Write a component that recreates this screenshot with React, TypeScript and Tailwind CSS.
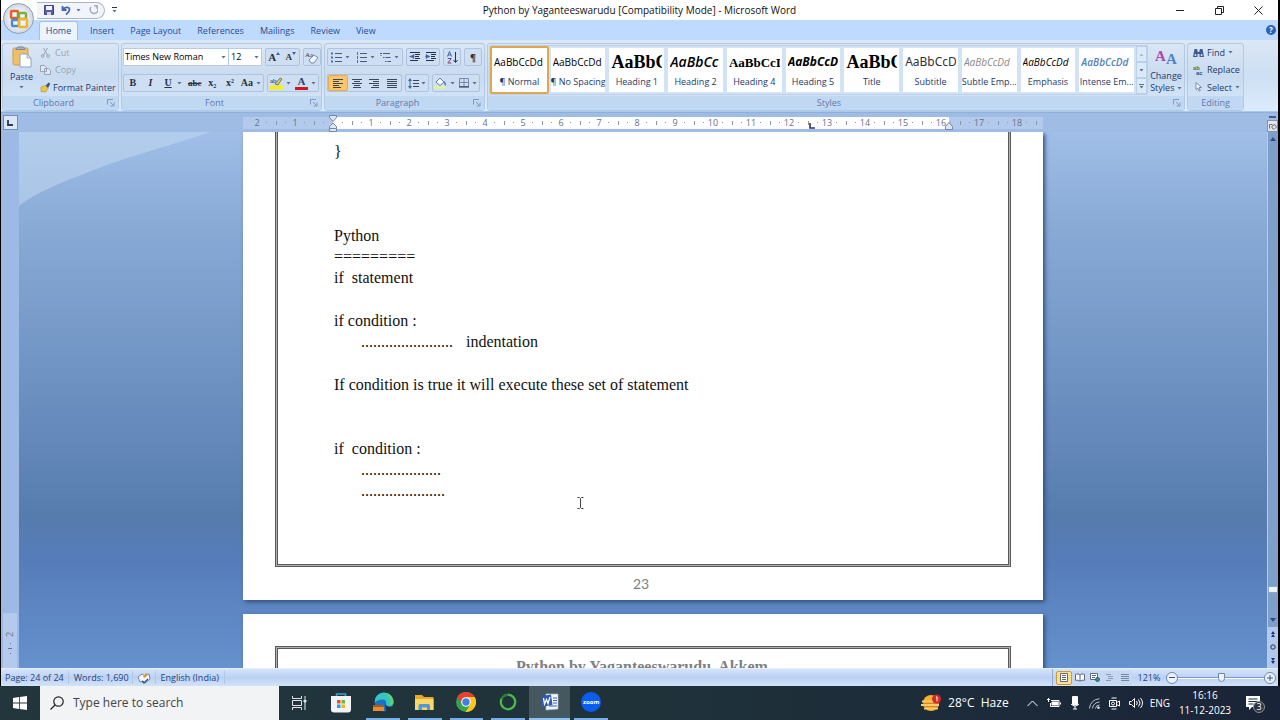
import React from "react";

type Kids = { children?: React.ReactNode };

function Caret({ className = "" }: { className?: string }) {
  return (
    <svg width="5" height="3" viewBox="0 0 5 3" className={"shrink-0 " + className} aria-hidden="true">
      <path d="M0.5 0h4L2.5 2.6z" fill="#5b6f94" />
    </svg>
  );
}

function Launcher() {
  return (
    <svg width="8" height="8" viewBox="0 0 8 8" aria-hidden="true">
      <path d="M.5 5.500V.5H6" fill="none" stroke="#7f99c4" />
      <path d="M3 3l3 3M7 3.500V7H3.500" fill="none" stroke="#7f99c4" />
    </svg>
  );
}

function Group({ label, className, launcher = true, children }: Kids & { label: string; className: string; launcher?: boolean }) {
  return (
    <section aria-label={label} className={"flex flex-col rounded-[3px] border border-[#b4c9e4] bg-linear-to-b from-[#dae6f4] via-[#c9dbf0] to-[#d6e8fa] " + className}>
      <div className="flex min-h-0 flex-1">{children}</div>
      <div className="flex h-[14px] items-center rounded-b-[3px] bg-[#c1d8f2] px-[3px] text-[#6079ac]">
        <span className="flex-1 text-center">{label}</span>
        {launcher && <span className="flex w-[14px] justify-end"><Launcher /></span>}
      </div>
    </section>
  );
}

function Box({ className = "", children }: Kids & { className?: string }) {
  return <div className={"flex h-[18px] items-stretch rounded-[2px] border border-[#aec3e0] bg-[#cfdff3] " + className}>{children}</div>;
}

function Tool({ label, className = "", children }: Kids & { label: string; className?: string }) {
  return (
    <button type="button" aria-label={label} className={"flex flex-1 items-center justify-center gap-[3px] font-['Liberation_Serif',serif] text-[10px] leading-none text-[#26303f] " + className}>
      {children}
    </button>
  );
}

function AlignIcon({ kind }: { kind: "left" | "center" | "right" | "full" }) {
  const d = {
    left: "M0 .5h10M0 2.500h6M0 4.500h10M0 6.500h6M0 8.500h8",
    center: "M0 .5h10M2 2.500h6M0 4.500h10M2 6.500h6M1 8.500h8",
    right: "M0 .5h10M4 2.500h6M0 4.500h10M4 6.500h6M2 8.500h8",
    full: "M0 .5h10M0 2.500h10M0 4.500h10M0 6.500h10M0 8.500h10",
  }[kind];
  return (
    <svg width="10" height="9" viewBox="0 0 10 9" aria-hidden="true">
      <path d={d} stroke="#3b4658" />
    </svg>
  );
}

function ListIcon({ kind }: { kind: "bullet" | "number" | "multi" }) {
  return (
    <svg width="11" height="11" viewBox="0 0 11 11" aria-hidden="true">
      {kind === "multi" ? (
        <path d="M0 1.500h2M3 1.500h7M3 5.500h1.500M5.500 5.500h5M5 9.500h1.500M7.500 9.500h3.500M1 3v1" stroke="#4b5a76" />
      ) : (
        <>
          <path d="M4 1.500h7M4 5.500h7M4 9.500h7" stroke="#4b5a76" />
          {kind === "bullet" ? (
            <path d="M0 1.500h2M0 5.500h2M0 9.500h2" stroke="#4a6fb5" strokeWidth="2" />
          ) : (
            <path d="M1.500 0v3M1.500 4v3M1.500 8v3" stroke="#4a6fb5" />
          )}
        </>
      )}
    </svg>
  );
}

function IndentIcon({ out = false }: { out?: boolean }) {
  return (
    <svg width="12" height="10" viewBox="0 0 12 10" aria-hidden="true">
      <path d="M1 .5h10M6 2.500h5M6 4.500h4M6 6.500h5M1 8.500h8" stroke="#26303f" />
      <path d={out ? "M5 2.500v4L1 4.500zM0 4.500h3" : "M1 2.500v4l4-2zM0 4.500h3"} fill="#3e63ad" stroke="#3e63ad" strokeWidth=".5" />
    </svg>
  );
}

function Ribbon() {
  const styles = [
    { name: "¶ Normal", sample: "AaBbCcDd", cls: "font-['Open_Sans',sans-serif] text-[10px] text-black" },
    { name: "¶ No Spacing", sample: "AaBbCcDd", cls: "font-['Open_Sans',sans-serif] text-[10px] text-black" },
    { name: "Heading 1", sample: "AaBbC", cls: "font-['Liberation_Serif',serif] text-[18px] font-bold text-black" },
    { name: "Heading 2", sample: "AaBbCc", cls: "font-['Open_Sans',sans-serif] text-[14px] font-semibold italic text-black" },
    { name: "Heading 4", sample: "AaBbCcD", cls: "font-['Liberation_Serif',serif] text-[13px] font-bold text-black" },
    { name: "Heading 5", sample: "AaBbCcD", cls: "font-['Open_Sans',sans-serif] text-[12px] font-bold italic text-black" },
    { name: "Title", sample: "AaBbC", cls: "font-['Liberation_Serif',serif] text-[18px] font-bold text-black" },
    { name: "Subtitle", sample: "AaBbCcD", cls: "font-['Noto_Sans',sans-serif] text-[12px] text-[#333]" },
    { name: "Subtle Emp...", sample: "AaBbCcDd", cls: "font-['Open_Sans',sans-serif] text-[10px] italic text-[#8a8a8a]" },
    { name: "Emphasis", sample: "AaBbCcDd", cls: "font-['Open_Sans',sans-serif] text-[10px] italic text-black" },
    { name: "Intense Em...", sample: "AaBbCcDd", cls: "font-['Open_Sans',sans-serif] text-[10px] font-semibold italic text-[#4f81bd]" },
  ];
  return (
    <div className="flex h-[72px] shrink-0 gap-[2px] border-b border-[#a9c9ee] bg-linear-to-b from-[#dbe7f5] via-[#cddff2] to-[#dcecfc] pt-[3px] pr-[34px] pl-[1px] text-[9px] text-[#233a6c]">
      <Group label="Clipboard" className="w-[117px]">
        <button type="button" className="flex w-[37px] flex-col items-center gap-[3px] pt-[2px]">
          <svg width="20" height="22" viewBox="0 0 20 22" aria-hidden="true">
            <rect x="1" y="2" width="15" height="17" rx="1.500" fill="#f0c069" stroke="#cf9d49" />
            <path d="M4 3.500C4 1.500 6 .8 8.500.8S13 1.500 13 3.500z" fill="#a9b0bd" stroke="#7f8796" />
            <path d="M8 8h7l4 4v9H8z" fill="#fff" stroke="#8fa3c4" />
            <path d="M15 8v4h4z" fill="#d5dff0" stroke="#8fa3c4" strokeWidth=".7" />
          </svg>
          <span className="leading-[12px]">Paste</span>
          <Caret />
        </button>
        <div className="flex flex-1 flex-col justify-around">
          <button type="button" className="flex items-center gap-[4px] text-[#98a4b6]">
            <svg width="11" height="10" viewBox="0 0 11 10" fill="none" stroke="#98a4b6" aria-hidden="true">
              <path d="M3.500 0l4 7M7.500 0l-4 7" />
              <circle cx="2.800" cy="8" r="1.400" />
              <circle cx="8.200" cy="8" r="1.400" />
            </svg>
            Cut
          </button>
          <button type="button" className="flex items-center gap-[4px] text-[#98a4b6]">
            <svg width="11" height="10" viewBox="0 0 11 10" fill="#dfe7f2" stroke="#98a4b6" aria-hidden="true">
              <path d="M.5.5h4l2 2v4h-6zM4.500 3.500h4l2 2v4h-6z" />
            </svg>
            Copy
          </button>
          <button type="button" className="flex items-center gap-[2px] whitespace-nowrap">
            <svg width="11" height="11" viewBox="0 0 11 11" aria-hidden="true">
              <path d="M5.500 4L8.500.5l1.800 1.200L8 6z" fill="#3f4f77" />
              <path d="M1 5l4.500-1.500L8 6.500 5.500 10 1 9.500z" fill="#edc548" stroke="#b58a25" strokeWidth=".6" />
            </svg>
            Format Painter
          </button>
        </div>
      </Group>

      <Group label="Font" className="w-[201px]">
        <div className="flex flex-1 flex-col justify-around px-[1px]">
          <div className="flex items-center gap-[3px]">
            <div className="flex h-[18px] items-center border border-[#b7cbe6] bg-white text-black">
              <select aria-label="Font name" className="h-full w-[97px] appearance-none pl-[1px] text-[9px] outline-none"><option>Times New Roman</option></select>
              <Caret className="mr-[2px]" />
              <select aria-label="Font size" className="h-full w-[26px] appearance-none border-l border-[#b7cbe6] pl-[2px] text-[9px] outline-none"><option>12</option></select>
              <Caret className="mr-[2px]" />
            </div>
            <Box className="w-[35px]">
              <Tool label="Grow font"><b className="text-[11px]">A</b><svg width="4" height="3" viewBox="0 0 4 3" className="-ml-[3px] mb-[8px]" aria-hidden="true"><path d="M2 0l2 3H0z" fill="#3e63ad" /></svg></Tool>
              <Tool label="Shrink font"><b className="text-[9px]">A</b><svg width="4" height="3" viewBox="0 0 4 3" className="-ml-[3px] mb-[8px]" aria-hidden="true"><path d="M2 3l2-3H0z" fill="#3e63ad" /></svg></Tool>
            </Box>
            <Box className="w-[18px]">
              <Tool label="Clear formatting">
                <svg width="14" height="13" viewBox="0 0 14 13" aria-hidden="true">
                  <text x="0" y="6" fontSize="7" fill="#333" fontFamily="Liberation Serif">Aa</text>
                  <path d="M4 9l5-5 4 2.500-4 5.500H6z" fill="#eef2f9" stroke="#5f7399" strokeWidth=".8" />
                </svg>
              </Tool>
            </Box>
          </div>
          <div className="flex items-center gap-[3px]">
            <Box className="w-[141px]">
              <Tool label="Bold"><b>B</b></Tool>
              <Tool label="Italic"><b className="italic">I</b></Tool>
              <Tool label="Underline"><b className="underline">U</b></Tool>
              <Caret className="self-center" />
              <Tool label="Strikethrough" className="ml-[4px]"><b className="text-[9px] line-through">abc</b></Tool>
              <Tool label="Subscript"><b>x<sub className="text-[6px]">2</sub></b></Tool>
              <Tool label="Superscript"><b>x<sup className="text-[6px]">2</sup></b></Tool>
              <Tool label="Change case" className="mx-[2px]"><b>Aa</b><Caret /></Tool>
            </Box>
            <Box className="w-[52px]">
              <Tool label="Highlight color">
                <svg width="13" height="14" viewBox="0 0 13 14" aria-hidden="true">
                  <path d="M0 11.500h13" stroke="#f6ee1c" strokeWidth="4" />
                  <text x="0" y="7" fontSize="7" fill="#222" fontFamily="Liberation Serif">ab</text>
                  <path d="M5 8l5-6 2 1-4 6z" fill="#e4c84c" stroke="#4a5878" strokeWidth=".7" />
                </svg>
                <Caret />
              </Tool>
              <Tool label="Font color">
                <span className="flex h-[14px] w-[13px] items-start justify-center border-b-[3px] border-[#d0161f] text-[11px] font-bold text-[#2f4270]">A</span>
                <Caret />
              </Tool>
            </Box>
          </div>
        </div>
      </Group>

      <Group label="Paragraph" className="w-[161px]">
        <div className="flex flex-1 flex-col justify-around px-[2px]">
          <div className="flex gap-[3px]">
            <Box className="w-[76px]">
              <Tool label="Bullets"><ListIcon kind="bullet" /><Caret /></Tool>
              <Tool label="Numbering"><ListIcon kind="number" /><Caret /></Tool>
              <Tool label="Multilevel list"><ListIcon kind="multi" /><Caret /></Tool>
            </Box>
            <Box className="w-[34px]">
              <Tool label="Decrease indent"><IndentIcon out /></Tool>
              <Tool label="Increase indent"><IndentIcon /></Tool>
            </Box>
            <Box className="w-[18px]">
              <Tool label="Sort">
                <svg width="11" height="13" viewBox="0 0 11 13" fill="none" aria-hidden="true">
                  <path d="M.5 5.500L2.500.5l2 5M1.200 4h2.600" stroke="#3e63ad" />
                  <path d="M.8 7.500h3.400L.8 12h3.600" stroke="#7b3f86" />
                  <path d="M8.500 1v10M6.500 9l2 2.500 2-2.500" stroke="#26303f" />
                </svg>
              </Tool>
            </Box>
            <Box className="w-[18px]">
              <Tool label="Show paragraph marks"><b className="text-[11px]">¶</b></Tool>
            </Box>
          </div>
          <div className="flex gap-[3px]">
            <Box className="w-[75px]">
              <Tool label="Align left" className="rounded-[2px] border border-[#e0ad55] bg-[#fcc566]"><AlignIcon kind="left" /></Tool>
              <Tool label="Center"><AlignIcon kind="center" /></Tool>
              <Tool label="Align right"><AlignIcon kind="right" /></Tool>
              <Tool label="Justify"><AlignIcon kind="full" /></Tool>
            </Box>
            <Box className="w-[24px]">
              <Tool label="Line spacing">
                <svg width="11" height="11" viewBox="0 0 11 11" aria-hidden="true">
                  <path d="M5 2.500h6M5 5.500h6M5 8.500h6" stroke="#3b4658" />
                  <path d="M2 0l2 3H0zM2 11L0 8h4zM1.500 3h1v5h-1z" fill="#3e63ad" />
                </svg>
                <Caret className="-ml-[1px]" />
              </Tool>
            </Box>
            <Box className="w-[48px]">
              <Tool label="Shading">
                <svg width="13" height="12" viewBox="0 0 13 12" aria-hidden="true">
                  <path d="M0 10.500h12" stroke="#dff0a8" strokeWidth="3" />
                  <path d="M2 5l4-4 4 4-4 3.500z" fill="#fff" stroke="#66789b" />
                  <path d="M10 4c2 1 2.500 3 1.500 5-1-1-1.500-2-1.500-5z" fill="#4a7ac7" />
                </svg>
                <Caret />
              </Tool>
              <Tool label="Borders">
                <svg width="10" height="10" viewBox="0 0 10 10" fill="none" stroke="#7689ab" aria-hidden="true">
                  <path d="M.5.5h9v8h-9zM5 .5v8M.5 4.500h9" />
                  <path d="M0 9h10" stroke="#26303f" />
                </svg>
                <Caret />
              </Tool>
            </Box>
          </div>
        </div>
      </Group>

      <Group label="Styles" className="min-w-0 flex-1">
        <div className="my-[1px] ml-[1px] flex min-w-0 flex-1 rounded-[2px] border border-[#bdd0ea] bg-[#d3e3f6]">
          {styles.map((s, i) => (
            <button
              key={s.name}
              type="button"
              className={
                i === 0
                  ? "flex min-w-0 flex-1 flex-col items-center overflow-hidden rounded-[2px] border-2 border-[#e0a84e] bg-white"
                  : "m-[2px] flex min-w-0 flex-1 flex-col items-center overflow-hidden bg-white"
              }
            >
              <span className="flex h-[28px] w-full px-[2px]">
                <span className={"flex w-full items-center overflow-hidden leading-none whitespace-nowrap " + s.cls}>{s.sample}</span>
              </span>
              <span className="leading-[12px] whitespace-nowrap">{s.name}</span>
            </button>
          ))}
          <div className="flex w-[11px] flex-col">
            {["Scroll up", "Scroll down", "More styles"].map((n, i) => (
              <button key={n} type="button" aria-label={n} className="flex flex-1 flex-col items-center justify-center gap-px border border-[#bdd0ea] bg-[#dce9f8]">
                {i === 2 && <span className="h-px w-[5px] bg-[#5b6f94]" />}
                <Caret className={i === 0 ? "rotate-180 opacity-40" : ""} />
              </button>
            ))}
          </div>
        </div>
        <button type="button" className="flex w-[36px] flex-col items-center gap-[2px] pt-[2px]">
          <svg width="22" height="22" viewBox="0 0 22 22" aria-hidden="true" fontFamily="Liberation Serif" fontWeight="bold">
            <text x="0" y="15" fontSize="15" fill="#b04aa8">A</text>
            <text x="11" y="18" fontSize="15" fill="#4a86cf">A</text>
          </svg>
          <span className="text-center leading-[12px] whitespace-nowrap">
            Change<br />
            Styles <Caret className="inline" />
          </span>
        </button>
      </Group>

      <Group label="Editing" className="w-[57px]" launcher={false}>
        <div className="flex flex-1 flex-col justify-around pl-[5px]">
          <button type="button" className="flex items-center gap-[3px]">
            <svg width="11" height="10" viewBox="0 0 11 10" fill="#3f5d92" aria-hidden="true">
              <path d="M1.500 1h2.500l.8 3h1.400L7 1h2.500l1.500 8H6.500V6h-2v3H0z" />
              <path d="M1.800 6h1.400v2H1.500zM7.800 6h1.400l.3 2H7.800z" fill="#c9d9f0" />
            </svg>
            Find <Caret />
          </button>
          <button type="button" className="flex items-center gap-[3px]">
            <svg width="11" height="10" viewBox="0 0 11 10" aria-hidden="true" fontFamily="Liberation Sans" fontWeight="bold">
              <text x="0" y="5" fontSize="6" fill="#4f7a45">ab</text>
              <text x="3" y="10" fontSize="6" fill="#334f8a">ac</text>
            </svg>
            Replace
          </button>
          <button type="button" className="flex items-center gap-[3px]">
            <svg width="11" height="10" viewBox="0 0 11 10" aria-hidden="true">
              <path d="M3 .5l5.500 5H6l1.300 3-1.300.6L4.700 6 3 7.500z" fill="#fff" stroke="#7a8ba8" />
            </svg>
            Select <Caret />
          </button>
        </div>
      </Group>
    </div>
  );
}

function RulerRow() {
  const marks: string[] = [];
  for (let n = -2; n <= 18; n++) {
    marks.push(n === 0 ? "" : String(Math.abs(n)));
    marks.push("|");
  }
  return (
    <div className="flex h-[20px] shrink-0 border-t border-[#8fb0dc] bg-[#9fbce4]">
      <div className="flex w-[18px] items-center justify-center">
        <button type="button" aria-label="Tab selector" className="flex size-[15px] items-center justify-center border border-[#6f8fbf] bg-[#dbe7f7]">
          <svg width="6" height="6" viewBox="0 0 6 6" aria-hidden="true"><path d="M1 0v5h5" fill="none" stroke="#2c3a55" strokeWidth="1.800" /></svg>
        </button>
      </div>
      <div className="flex min-w-0 flex-1 justify-center pt-[4px]">
        <div className="relative h-[12px] w-[800px] bg-[linear-gradient(to_right,#b3caec_90px,#fff_90px,#fff_706px,#b3caec_706px)]">
          <div className="flex h-[11px] items-center overflow-hidden pl-[4px] text-[9px] leading-none text-[#66728a]">
            {marks.map((m, i) => (
              <span key={i} className="flex w-[19px] shrink-0 grow items-center">
                <span className={i === 0 ? "size-px" : "size-px bg-[#8a97ae]"} />
                {m === "|" ? <span className="mx-auto h-[4px] w-px bg-[#8a97ae]" /> : <span className="flex-1 text-center">{m}</span>}
              </span>
            ))}
          </div>
          <svg width="8" height="18" viewBox="0 0 8 18" className="absolute -top-[2px] left-[86px]" aria-hidden="true">
            <path d="M.5.5h7v2L4 6.500.5 2.500zM4 8l3.500 3.500v2h-7v-2zM.5 13.500h7v3h-7z" fill="#dbe6f5" stroke="#7387a8" />
          </svg>
          <svg width="8" height="10" viewBox="0 0 8 10" className="absolute top-[5px] left-[702px]" aria-hidden="true">
            <path d="M4 .5l3.500 4v3h-7v-3z" fill="#dbe6f5" stroke="#7387a8" />
          </svg>
          <svg width="6" height="6" viewBox="0 0 6 6" className="absolute top-[6px] left-[566px]" aria-hidden="true">
            <path d="M1 0v5h5" fill="none" stroke="#2c3a55" strokeWidth="1.600" />
          </svg>
        </div>
      </div>
      <div className="flex w-[11px] flex-col items-center justify-end">
        <span className="mb-[2px] h-[2px] w-[7px] bg-[#3f5f94]" />
        <button type="button" aria-label="View ruler" className="flex h-[12px] w-[11px] items-center justify-center border border-[#8792a8] bg-[#e2e4ea]">
          <svg width="8" height="7" viewBox="0 0 8 7" fill="none" stroke="#6b7383" aria-hidden="true"><path d="M.5 5.500v-4h3M3 3l3-1.500L7.500 4 5 6.500 3 5z" /></svg>
        </button>
      </div>
    </div>
  );
}

function Line({ children }: Kids) {
  return <p className="whitespace-pre">{children}</p>;
}

function Workspace() {
  return (
    <main className="flex min-h-0 flex-1 overflow-hidden">
      <div className="flex w-[18px] shrink-0 flex-col justify-end bg-[#9dbae4]">
        <div className="mx-[2px] flex h-[55px] flex-col items-center gap-[4px] bg-[#b3caec] pt-[17px] text-[9px] leading-none text-[#66728a]">
          <span className="-rotate-90">2</span>
          <span className="size-px bg-[#66728a]" />
          <span className="h-px w-[4px] bg-[#66728a]" />
          <span className="size-px bg-[#66728a]" />
        </div>
      </div>
      <div className="relative min-w-0 flex-1 overflow-hidden bg-[linear-gradient(to_bottom,#a0bee8_0%,#88aad5_18%,#6f93c3_45%,#567cae_72%,#567dba_80%,#6591cc_100%)]">
        <svg width="200" height="76" viewBox="0 0 200 76" className="absolute top-0 left-0" aria-hidden="true">
          <path d="M0 0h192C150 14 100 27 65 42 40 51 15 62 0 74z" fill="#c6dcf2" opacity=".5" />
        </svg>
        <div className="relative mx-auto flex w-[800px] flex-col gap-[14px]">
          <article className="bg-white px-[32px] shadow-[2px_2px_4px_#33507c]">
            <div className="border border-t-0 border-[#5a5a5a] bg-[#b0b0b0] px-px pb-px">
              <div className="border border-t-0 border-[#5a5a5a] bg-white pt-[9px] pb-[63px] pl-[56px] font-['Liberation_Serif',serif] text-[16px] leading-[21px] text-[#111]">
                <Line>{"}"}</Line>
                <div className="mt-[63px]">
                  <Line>Python</Line>
                  <Line>=========</Line>
                  <Line>if  statement</Line>
                </div>
                <div className="mt-[22px]">
                  <Line>if condition :</Line>
                  <div className="flex gap-[13px] pl-[27px]">
                    <Line>.......................</Line>
                    <Line>indentation</Line>
                  </div>
                </div>
                <div className="mt-[22px]">
                  <Line>If condition is true it will execute these set of statement</Line>
                </div>
                <div className="mt-[43px]">
                  <Line>if  condition :</Line>
                  <div className="pl-[27px]">
                    <Line>....................</Line>
                    <Line>.....................</Line>
                  </div>
                </div>
              </div>
            </div>
            <p className="h-[33px] pt-[7px] pr-[4px] text-center font-['Lato',sans-serif] text-[14px] leading-[20px] text-[#808080]">23</p>
          </article>
          <article className="h-[400px] bg-white px-[32px] pt-[32px] shadow-[2px_2px_4px_#33507c]">
            <div className="h-full border border-[#5a5a5a] bg-[#b0b0b0] p-px">
              <div className="h-full border border-[#5a5a5a] bg-white pt-[8px] pr-[2px] text-center font-['Liberation_Serif',serif] text-[16px] leading-[20px] font-bold text-[#808080]">
                Python by Yaganteeswarudu, Akkem
              </div>
            </div>
          </article>
          <svg width="7" height="12" viewBox="0 0 7 12" className="absolute top-[365px] left-[334px]" aria-hidden="true">
            <path d="M.5.5h2l1 1 1-1h2M3.500 1.500v9M.5 11.500h2l1-1 1 1h2" fill="none" stroke="#444" />
          </svg>
        </div>
      </div>
      <div className="flex w-[11px] shrink-0 flex-col border-l border-[#b4cdef] bg-[#7f9fcb]">
        <button type="button" aria-label="Scroll up" className="flex h-[14px] items-center justify-center"><svg width="6" height="4" viewBox="0 0 6 4" aria-hidden="true"><path d="M3 0l3 4H0z" fill="#2f4d80" /></svg></button>
        <div className="flex-1" />
        <div className="h-[7px] border border-[#8ea6cb] bg-[#eef3fa]" />
        <div className="h-[20px]" />
        <button type="button" aria-label="Scroll down" className="flex h-[14px] items-center justify-center"><svg width="6" height="4" viewBox="0 0 6 4" aria-hidden="true"><path d="M3 4l3-4H0z" fill="#2f4d80" /></svg></button>
        <div className="flex h-[41px] flex-col justify-around bg-[#b0c9ec]">
          <button type="button" aria-label="Previous page" className="flex justify-center"><svg width="6" height="6" viewBox="0 0 6 6" aria-hidden="true"><path d="M3 0l2 3H1zM3 3l2 3H1z" fill="#1d3564" /></svg></button>
          <button type="button" aria-label="Select browse object" className="flex justify-center"><svg width="6" height="6" viewBox="0 0 6 6" aria-hidden="true"><circle cx="3" cy="3" r="2.200" fill="none" stroke="#1d3564" /></svg></button>
          <button type="button" aria-label="Next page" className="flex justify-center"><svg width="6" height="6" viewBox="0 0 6 6" aria-hidden="true"><path d="M3 3L1 0h4zM3 6L1 3h4z" fill="#1d3564" /></svg></button>
        </div>
      </div>
    </main>
  );
}

function StatusBar() {
  return (
    <footer className="flex h-[18px] shrink-0 items-center border-t border-[#e4effc] bg-linear-to-b from-[#d5e4f9] via-[#bbd1f3] to-[#d3e2fa] text-[9px] text-[#24427c]">
      <span className="border-r border-[#b0c7e8] px-[4px]">Page: 24 of 24</span>
      <span className="border-r border-[#b0c7e8] pr-[3px] pl-[5px]">Words: 1,690</span>
      <button type="button" aria-label="Proofing" className="px-[4px]">
        <svg width="14" height="12" viewBox="0 0 14 12" aria-hidden="true">
          <path d="M1 5l4-3 3 2 4-2 1 5-5 4-2-2-3 1z" fill="#f4f6fa" stroke="#7b869c" />
          <path d="M6 5l3-4 2 1-3 4z" fill="#d79a35" />
          <path d="M5 9l2 2 4-4" fill="none" stroke="#33558f" strokeWidth="1.400" />
        </svg>
      </button>
      <span className="border-x border-[#b0c7e8] px-[5px]">English (India)</span>
      <div className="flex-1" />
      <div className="flex h-full items-center border-l border-[#8fabd6] pl-[3px]">
        {["Print layout", "Full screen reading", "Web layout", "Outline", "Draft"].map((n, i) => (
          <button
            key={n}
            type="button"
            aria-label={n}
            className={i === 0 ? "flex h-[14px] w-[16px] items-center justify-center rounded-[2px] border border-[#d09a3c] bg-[#fde08f]" : "flex h-[14px] w-[15px] items-center justify-center bg-[#c5d8f3]"}
          >
            <svg width="10" height="9" viewBox="0 0 10 9" fill="none" stroke="#5c6880" aria-hidden="true">
              {i === 0 && <path d="M1.500.5h7v8h-7zM3 2.500h4M3 4.500h4M3 6.500h4" fill="#fff" />}
              {i === 1 && <path d="M.5 1.500c2-1 3.500-.5 4.500.5 1-1 2.500-1.500 4.500-.5v6C8 7 6 7 5 8.500 4 7 2 7 .5 7.500zM5 2v6" fill="#fff" />}
              {i === 2 && <><path d="M.5.5h7v6h-7zM2 2.500h4M2 4.500h3" fill="#fff" /><circle cx="7.500" cy="6.500" r="2" fill="#3d8b62" stroke="#2c5f9c" /></>}
              {i === 3 && <path d="M1 1.500h5M3 3.500h5M3 5.500h5M1 7.500h5" stroke="#8b98af" />}
              {i === 4 && <path d="M1 1.500h8M1 3.500h8M1 5.500h8M1 7.500h8" stroke="#72889f" />}
            </svg>
          </button>
        ))}
      </div>
      <span className="w-[34px] text-center">121%</span>
      <button type="button" aria-label="Zoom out" className="flex size-[12px] items-center justify-center rounded-full border border-[#6f87b0] bg-[#edf3fc]"><span className="h-px w-[6px] bg-[#3c5482]" /></button>
      <input
        type="range"
        aria-label="Zoom"
        min={0}
        max={100}
        defaultValue={51}
        className="h-[14px] w-[86px] appearance-none bg-[linear-gradient(to_bottom,transparent_6px,#7d97c4_6px,#7d97c4_7px,#fff_7px,#fff_8px,transparent_8px)] [&::-webkit-slider-thumb]:h-[9px] [&::-webkit-slider-thumb]:w-[7px] [&::-webkit-slider-thumb]:appearance-none [&::-webkit-slider-thumb]:rounded-b-[4px] [&::-webkit-slider-thumb]:border [&::-webkit-slider-thumb]:border-[#6f87b0] [&::-webkit-slider-thumb]:bg-[#edf3fc]"
      />
      <button type="button" aria-label="Zoom in" className="mr-[2px] flex size-[12px] items-center justify-center rounded-full border border-[#6f87b0] bg-[#edf3fc]">
        <svg width="6" height="6" viewBox="0 0 6 6" aria-hidden="true"><path d="M3 0v6M0 3h6" stroke="#3c5482" /></svg>
      </button>
    </footer>
  );
}

function WordWindow() {
  return (
    <div className="flex min-h-0 flex-1 flex-col border-r-2 border-l border-black bg-white font-['Open_Sans',sans-serif]">
      <header className="relative shrink-0">
        <div className="flex h-[20px] items-center">
          <div className="flex flex-1 items-center gap-[7px] pl-[36px]">
            <div className="flex h-[17px] items-center gap-[7px] rounded-r-full border border-l-0 border-[#a9b4c6] bg-[#f1f5fb] pr-[6px] pl-[7px]">
              <button type="button" aria-label="Save">
                <svg width="10" height="10" viewBox="0 0 10 10" aria-hidden="true">
                  <path d="M.5.5h9v9h-9z" fill="#5b5ca8" stroke="#43438a" />
                  <path d="M2 1h6v4H2z" fill="#f1f4fb" />
                  <path d="M3 7h4v3H3z" fill="#cfd6ea" />
                </svg>
              </button>
              <button type="button" aria-label="Undo" className="flex items-center gap-[5px]">
                <svg width="10" height="10" viewBox="0 0 10 10" fill="none" stroke="#4667b4" strokeWidth="1.800" aria-hidden="true">
                  <path d="M1.500 1v4h4M1.500 5C3 2 8.500 1 8.500 4.500 8.500 7 7 8 5 9.500" />
                </svg>
                <Caret />
              </button>
              <button type="button" aria-label="Redo">
                <svg width="10" height="10" viewBox="0 0 10 10" fill="none" stroke="#a2adc2" strokeWidth="1.500" aria-hidden="true">
                  <path d="M6 .8h3v3M8.500 1.200A4 4 0 1 1 3 2" />
                </svg>
              </button>
            </div>
            <button type="button" aria-label="Customize toolbar" className="flex flex-col items-center gap-[2px]">
              <span className="h-px w-[5px] bg-[#333]" />
              <Caret />
            </button>
          </div>
          <h1 className="text-[10px] whitespace-nowrap text-[#111]">Python by Yaganteeswarudu [Compatibility Mode] - Microsoft Word</h1>
          <div className="flex flex-1 items-center justify-end gap-[30px] pr-[15px] pl-[21px]">
            <button type="button" aria-label="Minimize"><svg width="9" height="9" viewBox="0 0 9 9" aria-hidden="true"><path d="M0 4.500h8" stroke="#222" /></svg></button>
            <button type="button" aria-label="Restore"><svg width="9" height="9" viewBox="0 0 9 9" fill="none" stroke="#222" aria-hidden="true"><path d="M.5 2.500h6v6h-6zM2.500 2V.5h6v6H7" /></svg></button>
            <button type="button" aria-label="Close"><svg width="9" height="9" viewBox="0 0 9 9" stroke="#222" aria-hidden="true"><path d="M.5.5l8 8M8.500.5l-8 8" /></svg></button>
          </div>
        </div>
        <nav className="flex h-[20px] items-end bg-[#bfdaff] pl-[38px] text-[9px] text-[#2b4a8f]">
          <a href="#home" className="flex h-[19px] w-[39px] items-center justify-center rounded-t-[3px] border border-b-0 border-[#a3c0e8] bg-[#ecf4fd]">Home</a>
          <div className="flex h-[19px] items-center gap-[16px] pl-[12px]">
            <a href="#insert">Insert</a>
            <a href="#page-layout">Page Layout</a>
            <a href="#references">References</a>
            <a href="#mailings">Mailings</a>
            <a href="#review">Review</a>
            <a href="#view">View</a>
          </div>
          <span className="flex-1" />
          <button type="button" aria-label="Help" className="mr-[2px] mb-[5px] flex size-[10px] items-center justify-center rounded-full bg-[#2a63b8] text-[8px] leading-none font-bold text-white">?</button>
        </nav>
        <button type="button" aria-label="Office menu" className="absolute top-[3px] left-[2px] flex size-[31px] items-center justify-center rounded-full border border-[#8f9db5] bg-radial from-white via-[#e4e9f2] to-[#b3bfd3]">
          <svg width="20" height="20" viewBox="0 0 20 20" fill="none" strokeWidth="2.400" aria-hidden="true">
            <rect x="2" y="2" width="7" height="7" rx="1" stroke="#e2602a" />
            <rect x="10" y="4" width="7" height="6" rx="1" stroke="#7fae3d" />
            <rect x="3" y="11" width="7" height="6" rx="1" stroke="#4a8ad4" />
            <rect x="10" y="10" width="8" height="8" rx="1" stroke="#efb52c" />
          </svg>
        </button>
      </header>
      <Ribbon />
      <RulerRow />
      <Workspace />
      <StatusBar />
    </div>
  );
}

function Taskbar() {
  const apps = [
    { name: "Task view", cls: "", icon: <svg width="15" height="14" viewBox="0 0 15 14" fill="none" stroke="#dfe5e8" aria-hidden="true"><path d="M.5 0v2.500h9V0M.5 14v-2.500h9V14M.5 4.500h9v5h-9zM13 0v3M13 6v8" /><path d="M12 4h2v2h-2z" fill="#dfe5e8" /></svg> },
    { name: "Store", cls: "", icon: <svg width="20" height="20" viewBox="0 0 20 20" aria-hidden="true"><path d="M5.500 3V1h9v2" fill="none" stroke="#3aa0dd" strokeWidth="1.500" /><path d="M0 3h20v13.500a3 3 0 0 1-3 3H3a3 3 0 0 1-3-3z" fill="#f1f3f5" /><path d="M6 7h3.500v3.500H6z" fill="#e8502e" /><path d="M10.500 7H14v3.500h-3.500z" fill="#79b829" /><path d="M6 11.500h3.500V15H6z" fill="#2b9be6" /><path d="M10.500 11.500H14V15h-3.500z" fill="#f5b61c" /></svg> },
    { name: "Edge", cls: "border-b-2 border-[#76b0e6]", icon: <svg width="21" height="20" viewBox="0 0 21 20" aria-hidden="true"><circle cx="11" cy="10" r="9.500" fill="#1b73c9" /><path d="M1.500 10a9.500 9.500 0 0 1 19 0c0 3-2.500 4-5 4-2 0-3-1-2.500-2.500.7-2-.5-4-3-4-4 0-7 2-8.500 2.500z" fill="#35c4c0" /><path d="M12 1a9 9 0 0 1 8.500 9c0 3-2.500 4-5 4 4-3 2-9-3.500-13z" fill="#5fd36a" /><path d="M12 11c1 4 4 4.500 7 3.500-1 3-3 4.500-6 5z" fill="#22343a" /><path d="M0 13h11v6H0z" fill="#e98a2b" /><path d="M0 13h11v2H0z" fill="#a85a17" /></svg> },
    { name: "File Explorer", cls: "border-b-2 border-[#76b0e6]", icon: <svg width="19" height="17" viewBox="0 0 19 17" aria-hidden="true"><path d="M0 1h7l2 2h9.500v13H0z" fill="#e9a92c" /><path d="M0 5h18.500v11H0z" fill="#fbd768" /><path d="M3.500 16v-4.500q0-1.500 1.500-1.500h8.500q1.500 0 1.500 1.500V16h-3v-2.500h-5V16z" fill="#4a9bd8" /></svg> },
    { name: "Chrome", cls: "border-b-2 border-[#76b0e6]", icon: <svg width="20" height="20" viewBox="0 0 20 20" aria-hidden="true"><circle cx="10" cy="10" r="10" fill="#34a350" /><path d="M1.300 5A10 10 0 0 1 18.700 5H10L6 12.500z" fill="#e5412f" /><path d="M18.700 5A10 10 0 0 1 9.500 20l4.800-7.500L10 5z" fill="#fbc51c" /><circle cx="10" cy="10" r="4.800" fill="#fff" /><circle cx="10" cy="10" r="3.700" fill="#3f7fe8" /></svg> },
    { name: "Recorder", cls: "border-b-2 border-[#76b0e6]", icon: <svg width="18" height="18" viewBox="0 0 18 18" fill="none" aria-hidden="true"><circle cx="9" cy="9" r="7.200" stroke="#2a7d3a" strokeWidth="2.500" /><path d="M9 1.800A7.200 7.200 0 1 1 2.500 6" stroke="#4fb84f" strokeWidth="2" /></svg> },
    { name: "Word", cls: "border-b-2 border-[#8fc2f0]", icon: <svg width="19" height="18" viewBox="0 0 19 18" aria-hidden="true"><path d="M6 1h12v15l-12 1z" fill="#f3f6fb" stroke="#aebbd3" strokeWidth=".7" /><path d="M13 5h4M13 7.500h4M13 10h4M9 13h8" stroke="#3d62ad" /><path d="M2 3l9-1.500L12.500 12 1 14z" fill="#2f5caf" /><path d="M3.500 5l1 6 2-4.500 1.500 4 2-6.500" fill="none" stroke="#fff" strokeWidth="1.300" /></svg> },
    { name: "Zoom", cls: "border-b-2 border-[#76b0e6]", icon: <span className="flex size-[20px] items-center justify-center rounded-full bg-[#0b5cf0] text-[6px] font-bold text-white">zoom</span> },
  ];
  return (
    <footer className="flex h-[34px] shrink-0 items-stretch bg-linear-to-r from-[#22363c] via-[#1f323a] to-[#1a2438] font-['Open_Sans',sans-serif] text-white">
      <button type="button" aria-label="Start" className="flex w-[40px] items-center justify-center">
        <svg width="14" height="14" viewBox="0 0 14 14" fill="#fff" aria-hidden="true"><path d="M0 2l6-.9v5.500H0zM6.800 1L14 0v6.600H6.800zM0 7.400h6v5.500L0 12zM6.800 7.400H14V14l-7.200-1z" /></svg>
      </button>
      <label className="flex w-[239px] items-center gap-[9px] bg-[#f2f3f4] pl-[10px]">
        <svg width="14" height="14" viewBox="0 0 14 14" fill="none" stroke="#222" strokeWidth="1.200" aria-hidden="true"><circle cx="8.500" cy="5.500" r="4.700" /><path d="M5 9L.5 13.500" /></svg>
        <input type="text" aria-label="Search" placeholder="Type here to search" className="min-w-0 flex-1 bg-transparent text-[12px] outline-none placeholder:text-[#444]" />
      </label>
      <div className="flex w-[333px]">
        {apps.map((a) => (
          <button key={a.name} type="button" aria-label={a.name} className={a.name === "Word" ? "flex flex-1 bg-[#45575f]" : "flex flex-1"}>
            <span className={"flex flex-1 items-center justify-center self-stretch " + (a.name === "Word" ? "" : "mx-[4px] ") + a.cls}>{a.icon}</span>
          </button>
        ))}
      </div>
      <div className="flex-1" />
      <div className="flex items-center gap-[7px] text-[12px]">
        <button type="button" className="flex items-center gap-[7px]">
          <svg width="20" height="18" viewBox="0 0 20 18" aria-hidden="true">
            <circle cx="10" cy="9" r="8" fill="#f6b12d" />
            <path d="M1 7.500h14M0 11h18M3 14.500h14" stroke="#f7cf6a" strokeWidth="1.800" />
            <path d="M2 9.300h16M2 12.700h16" stroke="#c96a25" strokeWidth=".8" />
            <circle cx="15.500" cy="5" r="4.500" fill="#d42a2a" />
            <path d="M15 3.500l1-.8v4.600" stroke="#fff" fill="none" />
          </svg>
          <span className="whitespace-pre">28°C  Haze</span>
        </button>
        <div className="flex items-center gap-[9px] pl-[11px]">
          <svg width="11" height="7" viewBox="0 0 11 7" fill="none" stroke="#fff" aria-hidden="true"><path d="M.5 6L5.500 1l5 5" /></svg>
          <svg width="14" height="10" viewBox="0 0 14 10" fill="none" stroke="#fff" aria-hidden="true"><path d="M4 2.500h8v6H3.500V5M13.500 4.500v2M0 1.500h3M1.500 0v4" /><path d="M5 4h6v3H5z" fill="#fff" /></svg>
          <svg width="10" height="14" viewBox="0 0 10 14" fill="#fff" aria-hidden="true"><rect x="2" y="0" width="6" height="9" rx="1" /><path d="M1 8q4 4 8 0M5 9.500V13M3 13h4" stroke="#fff" fill="none" /></svg>
          <svg width="11" height="11" viewBox="0 0 11 11" fill="none" stroke="#b9c3cc" aria-hidden="true"><path d="M.5 10.500A10 10 0 0 1 10.500.8M3.500 10.500a7 7 0 0 1 7-6.500M6.500 10.500a4 4 0 0 1 4-3.500" /><circle cx="9.500" cy="9.700" r="1" fill="#fff" /></svg>
          <svg width="11" height="13" viewBox="0 0 11 13" fill="none" stroke="#fff" aria-hidden="true"><path d="M2.500 1h5M2.500 12h5M.5 3.500h7v6h-7zM7.500 5.500l3-1.500v5l-3-1.500" /><circle cx="4" cy="6.500" r="1.500" /></svg>
          <svg width="14" height="12" viewBox="0 0 14 12" fill="none" stroke="#fff" aria-hidden="true"><path d="M.5 4.500h2L5.500 1.500v9l-3-3h-2zM7.500 4q1.500 2 0 4M9.500 2.500q3 3.500 0 7M11.500 1q4 5 0 10" /></svg>
        </div>
        <span className="text-[10px]">ENG</span>
        <div className="w-[56px] text-center text-[10px] leading-[15px] whitespace-nowrap">16:16<br />11-12-2023</div>
        <button type="button" aria-label="Notifications" className="relative mr-[19px] ml-[6px]">
          <svg width="15" height="15" viewBox="0 0 15 15" aria-hidden="true"><path d="M0 0h14v11H6l-3 3v-3H0z" fill="#fff" /><path d="M2.500 3h9M2.500 5.500h9M2.500 8h5" stroke="#1b2a3b" /></svg>
          <span className="absolute top-[5px] left-[7px] flex size-[12px] items-center justify-center rounded-full border border-[#8a939c] bg-[#30363f] text-[9px] leading-none">3</span>
        </button>
      </div>
    </footer>
  );
}

export default function App() {
  return (
    <div className="flex h-screen min-w-[1100px] flex-col overflow-hidden bg-black">
      <WordWindow />
      <Taskbar />
    </div>
  );
}
